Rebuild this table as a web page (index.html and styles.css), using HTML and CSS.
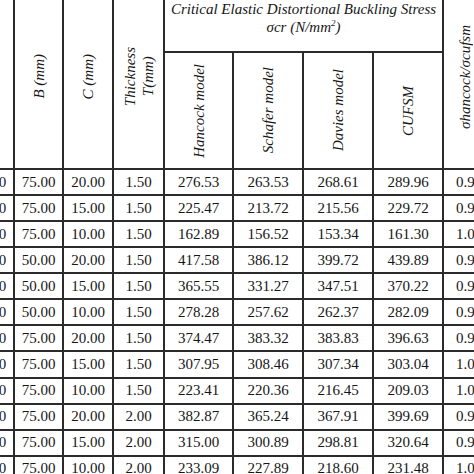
FILE: index.html
```html
<!DOCTYPE html>
<html>
<head>
<meta charset="utf-8">
<link rel="stylesheet" href="styles.css">
</head>
<body>
<div class="frame">
<table class="tbl">
  <colgroup>
    <col class="c-a"><col class="c-b"><col class="c-c"><col class="c-t">
    <col class="c-h"><col class="c-m"><col class="c-m"><col class="c-m">
    <col class="c-r">
  </colgroup>
  <thead>
    <tr class="h1">
      <th rowspan="2"><div class="vbox"><span class="vt">D (mm)</span></div></th>
      <th rowspan="2"><div class="vbox"><span class="vt">B (mm)</span></div></th>
      <th rowspan="2"><div class="vbox"><span class="vt">C (mm)</span></div></th>
      <th rowspan="2"><div class="vbox"><span class="vt">Thickness<br>T(mm)</span></div></th>
      <th colspan="4" class="group">Critical Elastic Distortional Buckling Stress<br>σcr (N/mm<sup>2</sup>)</th>
      <th rowspan="2" class="ratio-head"><div class="vbox"><span class="vt">σhancock/σcufsm</span></div></th>
    </tr>
    <tr class="h2">
      <th><div class="vbox"><span class="vt">Hancock model</span></div></th>
      <th><div class="vbox"><span class="vt">Schafer model</span></div></th>
      <th><div class="vbox"><span class="vt">Davies model</span></div></th>
      <th><div class="vbox"><span class="vt">CUFSM</span></div></th>
    </tr>
  </thead>
  <tbody>
    <tr><td>150.00</td><td>75.00</td><td>20.00</td><td>1.50</td><td>276.53</td><td>263.53</td><td>268.61</td><td>289.96</td><td>0.95</td></tr>
    <tr><td>150.00</td><td>75.00</td><td>15.00</td><td>1.50</td><td>225.47</td><td>213.72</td><td>215.56</td><td>229.72</td><td>0.98</td></tr>
    <tr><td>150.00</td><td>75.00</td><td>10.00</td><td>1.50</td><td>162.89</td><td>156.52</td><td>153.34</td><td>161.30</td><td>1.01</td></tr>
    <tr><td>150.00</td><td>50.00</td><td>20.00</td><td>1.50</td><td>417.58</td><td>386.12</td><td>399.72</td><td>439.89</td><td>0.95</td></tr>
    <tr><td>150.00</td><td>50.00</td><td>15.00</td><td>1.50</td><td>365.55</td><td>331.27</td><td>347.51</td><td>370.22</td><td>0.99</td></tr>
    <tr><td>150.00</td><td>50.00</td><td>10.00</td><td>1.50</td><td>278.28</td><td>257.62</td><td>262.37</td><td>282.09</td><td>0.99</td></tr>
    <tr><td>200.00</td><td>75.00</td><td>20.00</td><td>1.50</td><td>374.47</td><td>383.32</td><td>383.83</td><td>396.63</td><td>0.94</td></tr>
    <tr><td>200.00</td><td>75.00</td><td>15.00</td><td>1.50</td><td>307.95</td><td>308.46</td><td>307.34</td><td>303.04</td><td>1.02</td></tr>
    <tr><td>200.00</td><td>75.00</td><td>10.00</td><td>1.50</td><td>223.41</td><td>220.36</td><td>216.45</td><td>209.03</td><td>1.07</td></tr>
    <tr><td>200.00</td><td>75.00</td><td>20.00</td><td>2.00</td><td>382.87</td><td>365.24</td><td>367.91</td><td>399.69</td><td>0.96</td></tr>
    <tr><td>200.00</td><td>75.00</td><td>15.00</td><td>2.00</td><td>315.00</td><td>300.89</td><td>298.81</td><td>320.64</td><td>0.98</td></tr>
    <tr><td>200.00</td><td>75.00</td><td>10.00</td><td>2.00</td><td>233.09</td><td>227.89</td><td>218.60</td><td>231.48</td><td>1.01</td></tr>
  </tbody>
</table>
</div>
</body>
</html>
```

FILE: styles.css
```css
html, body {
  margin: 0;
  padding: 0;
  background: #ffffff;
}
.frame {
  width: 474px;
  height: 474px;
  overflow: hidden;
  background: #ffffff;
}
.tbl {
  margin: -17px 0 0 -44px;
  border-collapse: collapse;
  table-layout: fixed;
  width: 538px;
  font-family: "Liberation Serif", "Times New Roman", serif;
  color: #161616;
}
.c-a { width: 57px; }
.c-b { width: 49px; }
.c-c { width: 50px; }
.c-t { width: 51px; }
.c-h { width: 69px; }
.c-m { width: 70px; }
.c-r { width: 52px; }
.tbl th, .tbl td {
  border: 2px solid #2b2b2b;
  padding: 0;
  text-align: center;
  vertical-align: middle;
}
.tbl th {
  font-weight: normal;
  font-style: italic;
  font-size: 15px;
  line-height: 18px;
}
.tbl th.ratio-head {
  padding-right: 8px;
}
.h1 { height: 68px; }
.h2 { height: 117px; }
.group {
  font-size: 15px;
  line-height: 18px;
}
.group sup {
  font-size: 9px;
  line-height: 0;
  vertical-align: 6px;
}
.vbox {
  display: flex;
  justify-content: center;
  align-items: center;
}
.vt {
  display: block;
  writing-mode: vertical-rl;
  transform: rotate(180deg);
  white-space: nowrap;
  line-height: 18px;
}
.tbl td {
  font-size: 15px;
  height: 24.07px;
  line-height: 17px;
}
```
